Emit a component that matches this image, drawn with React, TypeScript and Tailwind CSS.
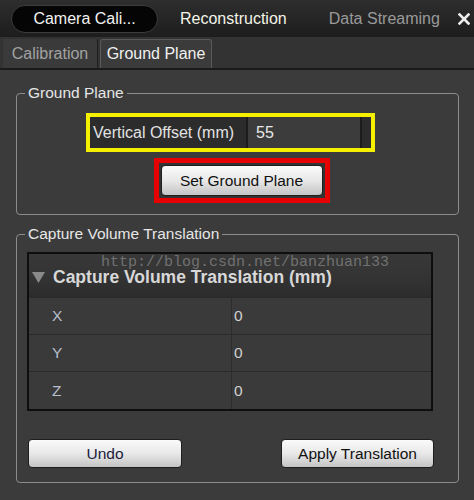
import React from "react";

const F = { fontFamily: '"Liberation Sans", Arial, sans-serif' };

function GrayButton({ children, className = "" }: { children: React.ReactNode; className?: string }) {
  return (
    <div
      className={
        "flex items-center justify-center rounded-[4px] border border-[#1e1e1e] bg-gradient-to-b from-[#fafafa] via-[#e8e8e8] to-[#c4c4c4] text-[15.5px] text-[#1a1a3a] " +
        className
      }
    >
      {children}
    </div>
  );
}

export default function App() {
  return (
    <div className="relative w-[474px] h-[500px] bg-[#3b3b3b] overflow-hidden flex flex-col" style={F}>
      {/* top tab bar */}
      <div className="h-[37px] flex items-center bg-gradient-to-b from-[#2e2e2e] to-[#1d1d1d] text-[16px] whitespace-nowrap">
        <div className="shrink-0 ml-[11px] w-[147px] h-[28px] rounded-full bg-[#050505] border border-[#3c3c3c] flex items-center justify-center text-[#f2f2f2]">
          Camera Cali...
        </div>
        <div className="shrink-0 ml-[22px] text-[#f4f4e8]">Reconstruction</div>
        <div className="shrink-0 ml-[42px] text-[#9a9a9a]">Data Streaming</div>
        <svg width="12" height="12" viewBox="0 0 12 12" className="shrink-0 ml-[18px] mt-[1px]">
          <path d="M1.5 1.5 L10.5 10.5 M10.5 1.5 L1.5 10.5" stroke="#eeeeee" strokeWidth="2.6" strokeLinecap="square" />
        </svg>
      </div>
      {/* second tab bar */}
      <div className="h-[33px] flex items-end bg-[#333333] border-b-2 border-[#1a1a1a] text-[16px]">
        <div className="ml-[3px] w-[95px] h-[29px] flex items-center justify-center text-[#a2a2a2] bg-[#3a3a3a] border-r border-[#1f1f1f]">
          Calibration
        </div>
        <div className="ml-[2px] w-[112px] h-[29px] flex items-center justify-center text-[#f0f0f0] bg-[#3b3b3b] border border-b-0 border-[#5a5a5a] rounded-t-[3px]">
          Ground Plane
        </div>
      </div>

      {/* content */}
      <div className="flex flex-col px-[16px] pr-[15px] pt-[14px]">
        <fieldset className="border border-[#8c8c8c] rounded-[4px] h-[131px] pt-[11px]">
          <legend className="ml-[8px] px-[3px] text-[15.5px] text-[#e6e6e6] leading-[18px]">Ground Plane</legend>
          <div className="flex flex-col items-center">
            <div className="ml-[-14px] w-[289px] h-[39px] border-4 border-[#f5f000] flex bg-[#2c2c2c]">
              <div className="w-[156px] flex items-center pl-[3px] text-[16px] text-[#e2e2e2]">Vertical Offset (mm)</div>
              <div className="w-[116px] bg-[#3c3c3c] border-x-2 border-[#1c1c1c] flex items-center pl-[8px] text-[16px] text-[#e8e8e8]">55</div>
            </div>
            <div className="mt-[6px] ml-[8px] w-[176px] h-[45px] border-[5px] border-[#e60000] bg-[#333333] flex items-center justify-center">
              <GrayButton className="w-[162px] h-[31px] text-[#111111]">Set Ground Plane</GrayButton>
            </div>
          </div>
        </fieldset>

        <fieldset className="mt-[10px] border border-[#8c8c8c] rounded-[4px] h-[258px] pt-[9px] px-[10px]">
          <legend className="ml-[-2px] px-[3px] text-[15.5px] text-[#e6e6e6] leading-[18px]">Capture Volume Translation</legend>
          <div className="relative w-[406px] border-2 border-[#0e0e0e] flex flex-col">
            <div className="h-[44px] flex items-center bg-gradient-to-b from-[#383838] via-[#343434] to-[#2c2c2c] border-b border-[#2a2a2a]">
              <svg width="13" height="12" viewBox="0 0 13 12" className="ml-[3px] mt-[3px]">
                <polygon points="0,1 13,1 6.5,12" fill="#8a8a8a" />
              </svg>
              <span className="ml-[8px] mt-[3px] text-[17.5px] font-bold text-[#d8d8d8]">
                Capture Volume Translation (mm)
              </span>
            </div>
            {["X", "Y", "Z"].map((l, i) => (
              <div key={l} className={"h-[37px] flex bg-[#3a3a3a] " + (i < 2 ? "border-b border-[#2a2a2a]" : "")}>
                <div className="w-[203px] border-r border-[#2c2c2c] flex items-center pl-[23px] text-[15.5px] text-[#b8bfcc]">{l}</div>
                <div className="flex items-center pl-[2px] text-[15.5px] text-[#d0d0d0]">0</div>
              </div>
            ))}
            <div
              className="absolute left-[72px] top-[-2px] text-[15px] text-[#8a8a8a] opacity-70 whitespace-nowrap"
              style={{ fontFamily: '"Liberation Mono", "DejaVu Sans Mono", monospace' }}
            >
              http://blog.csdn.net/banzhuan133
            </div>
          </div>
          <div className="mt-[28px] flex justify-between w-[406px]">
            <GrayButton className="w-[154px] h-[29px] ml-[1px]">Undo</GrayButton>
            <GrayButton className="w-[153px] h-[29px] mr-[-1px] text-[#111111]">Apply Translation</GrayButton>
          </div>
        </fieldset>
      </div>
    </div>
  );
}
